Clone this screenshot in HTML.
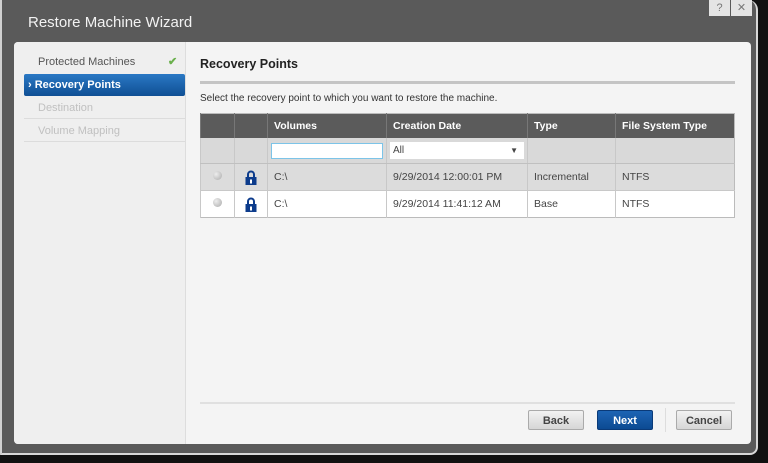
<!DOCTYPE html>
<html><head><style>
body{margin:0;width:768px;height:463px;background:#111;font-family:"Liberation Sans",sans-serif;position:relative;overflow:hidden}
.dlg{position:absolute;left:0;top:0;width:758px;height:455px;background:#5a5a5a;border:2px solid #d8d8d8;border-top:none;border-left:2px solid #d0d0d0;border-radius:0 0 8px 0;border-top-right-radius:10px;box-sizing:border-box}
.title{position:absolute;left:28px;top:14px;color:#f2f2f2;font-size:15px}
.hb{position:absolute;top:0;height:16px;width:21px;background:#e4e4e4;color:#777;font-size:11px;text-align:center;line-height:16px}
.panel{position:absolute;left:14px;top:42px;width:737px;height:402px;background:#f4f4f4;border-radius:4px;overflow:hidden}
.side{position:absolute;left:0;top:0;width:171px;height:402px;background:#efefef;border-right:1px solid #ddd}
.si{position:absolute;left:10px;width:161px;height:22px;font-size:11px;line-height:22px;padding-left:14px;box-sizing:border-box;color:#555}
.dis{color:#c0c0c0;border-bottom:1px solid #dcdcdc}
.sel{background:linear-gradient(#2a78c4,#0f4f94);color:#fff;font-weight:bold;border-radius:2px;padding-left:4px}
.t{position:absolute;font-size:11px;color:#333}
table{position:absolute;left:200px;top:113px;width:535px;border-collapse:collapse;font-size:10.5px;color:#444;border:1px solid #bbb}
td,th{border-left:1px solid #c8c8c8;padding:0 6px;text-align:left;white-space:nowrap}
th{background:#5b5b5b;color:#fff;height:24px;border-left:1px solid #777}
.f td{background:#d9d9d9;height:25px;border-bottom:1px solid #c0c0c0}
.r1 td{background:#dcdcdc;height:26px;border-bottom:1px solid #c8c8c8}
.r2 td{background:#fff;height:26px}
.btn{position:absolute;top:410px;width:56px;height:20px;border:1px solid #aaa;border-radius:2px;background:linear-gradient(#f2f2f2,#d6d6d6);font-size:11px;font-weight:bold;color:#444;text-align:center;line-height:20px;box-sizing:border-box}
.dot{display:inline-block;width:9px;height:9px;border-radius:50%;background:radial-gradient(circle at 35% 35%,#eee,#aaa)}
svg{display:block;margin:0 auto}
</style></head><body>
<div class="dlg"></div>
<div class="title">Restore Machine Wizard</div>
<div class="hb" style="left:709px">?</div><div class="hb" style="left:731px">✕</div>
<div class="panel">
<div class="side">
<div class="si" style="top:9px">Protected Machines<span style="position:absolute;left:144px;color:#6ab04c;font-weight:bold">✔</span></div>
<div class="si sel" style="top:32px">› Recovery Points</div>
<div class="si dis" style="top:55px">Destination</div>
<div class="si dis" style="top:78px">Volume Mapping</div>
</div>
</div>
<div class="t" style="left:200px;top:57px;font-size:12.5px;font-weight:bold;color:#222">Recovery Points</div>
<div style="position:absolute;left:200px;top:81px;width:535px;height:3px;background:#c4c4c4"></div>
<div class="t" style="left:200px;top:93px;font-size:10px">Select the recovery point to which you want to restore the machine.</div>
<table>
<tr><th style="width:21px"></th><th style="width:20px"></th><th style="width:106px">Volumes</th><th style="width:128px">Creation Date</th><th style="width:75px">Type</th><th>File System Type</th></tr>
<tr class="f"><td></td><td></td><td style="padding:0 3px"><div style="height:16px;background:#fff;border:1px solid #7cc4e8;box-sizing:border-box"></div></td><td style="padding:0 3px"><div style="height:17px;background:#fff;font-size:10px;line-height:17px;padding-left:3px;position:relative">All<span style="position:absolute;right:6px;font-size:8px">▼</span></div></td><td></td><td></td></tr>
<tr class="r1"><td style="text-align:center"><span class="dot"></span></td><td><svg width="12" height="15" viewBox="0 0 12 15"><path d="M3 7V4.5a3 3 0 0 1 6 0V7" fill="none" stroke="#0d3c8c" stroke-width="2"/><rect x="0.5" y="7" width="11" height="8" fill="#0d3c8c"/><rect x="5" y="9.5" width="2" height="4" fill="#fff"/></svg></td><td>C:\</td><td>9/29/2014 12:00:01 PM</td><td>Incremental</td><td>NTFS</td></tr>
<tr class="r2"><td style="text-align:center"><span class="dot"></span></td><td><svg width="12" height="15" viewBox="0 0 12 15"><path d="M3 7V4.5a3 3 0 0 1 6 0V7" fill="none" stroke="#0d3c8c" stroke-width="2"/><rect x="0.5" y="7" width="11" height="8" fill="#0d3c8c"/><rect x="5" y="9.5" width="2" height="4" fill="#fff"/></svg></td><td>C:\</td><td>9/29/2014 11:41:12 AM</td><td>Base</td><td>NTFS</td></tr>
</table>
<div style="position:absolute;left:200px;top:402px;width:535px;height:2px;background:#e0e0e0"></div>
<div class="btn" style="left:528px">Back</div>
<div class="btn" style="left:597px;background:linear-gradient(#1d64b4,#0c4a92);color:#fff;border-color:#0a3a78">Next</div>
<div style="position:absolute;left:665px;top:408px;width:1px;height:24px;background:#ddd"></div>
<div class="btn" style="left:676px">Cancel</div>
</body></html>
